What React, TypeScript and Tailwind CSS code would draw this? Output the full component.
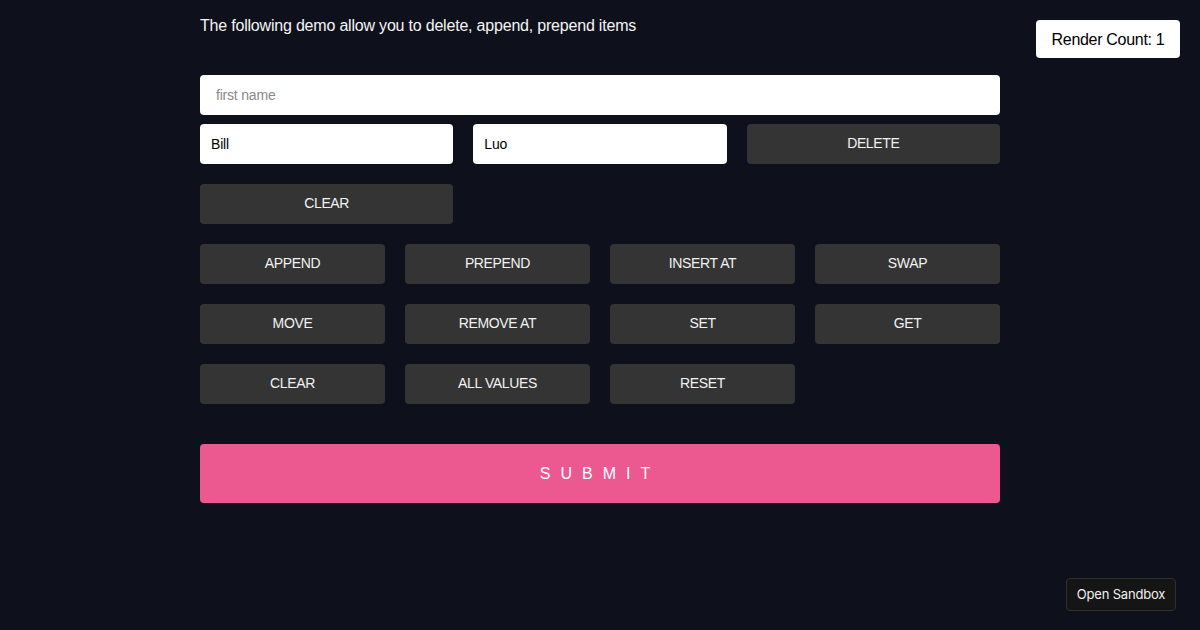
const actions = [
  ['APPEND', 'PREPEND', 'INSERT AT', 'SWAP'],
  ['MOVE', 'REMOVE AT', 'SET', 'GET'],
  ['CLEAR', 'ALL VALUES', 'RESET'],
]

function Btn({ children }: { children: string }) {
  return (
    <button
      type="button"
      className="h-10 rounded bg-[#343434] pb-[2px] text-sm tracking-[-0.35px] text-[#f2f2f2]"
    >
      {children}
    </button>
  )
}

const inputClass = 'h-10 w-full rounded bg-white text-sm tracking-[-0.2px] text-black outline-none placeholder:text-[#8a8a8a]'

export default function App() {
  return (
    <div
      className="relative h-[630px] w-[1200px] overflow-hidden bg-[#0e101c] text-white"
      style={{ fontFamily: '"Liberation Sans", Arial, sans-serif' }}
    >
      <form className="mx-auto w-[800px] pt-[14px]">
        <p className="text-base leading-6 tracking-[-0.2px] text-[#f5f5f5]">
          The following demo allow you to delete, append, prepend items
        </p>

        <input placeholder="first name" className={`${inputClass} mt-[37px] px-4`} />

        <div className="mt-[9px] grid grid-cols-3 gap-5">
          <input defaultValue="Bill" className={`${inputClass} px-[11px]`} />
          <input defaultValue="Luo" className={`${inputClass} px-[11px]`} />
          <Btn>DELETE</Btn>
        </div>

        <div className="mt-5 grid grid-cols-3 gap-5">
          <Btn>CLEAR</Btn>
        </div>

        {actions.map((row, i) => (
          <div key={i} className="mt-5 grid grid-cols-4 gap-5">
            {row.map((label) => (
              <Btn key={label}>{label}</Btn>
            ))}
          </div>
        ))}

        <button
          type="submit"
          className="mt-10 h-[59px] w-full rounded bg-[#ec5990] text-base tracking-[10px] text-white"
        >
          SUBMIT
        </button>
      </form>

      <div className="absolute right-5 top-5 flex h-[38px] w-[144px] items-center justify-center rounded bg-white pt-[2px] text-base tracking-[-0.3px] text-black">
        Render Count: 1
      </div>

      <button
        type="button"
        className="absolute bottom-[19px] right-[24px] flex h-[33px] w-[110px] items-center justify-center rounded border border-[#2f2f2f] bg-[#151515] text-[13px] tracking-[-0.2px] text-[#f0f0f0]"
        style={{ fontFamily: 'Inter, "Liberation Sans", sans-serif' }}
      >
        Open Sandbox
      </button>
    </div>
  )
}
